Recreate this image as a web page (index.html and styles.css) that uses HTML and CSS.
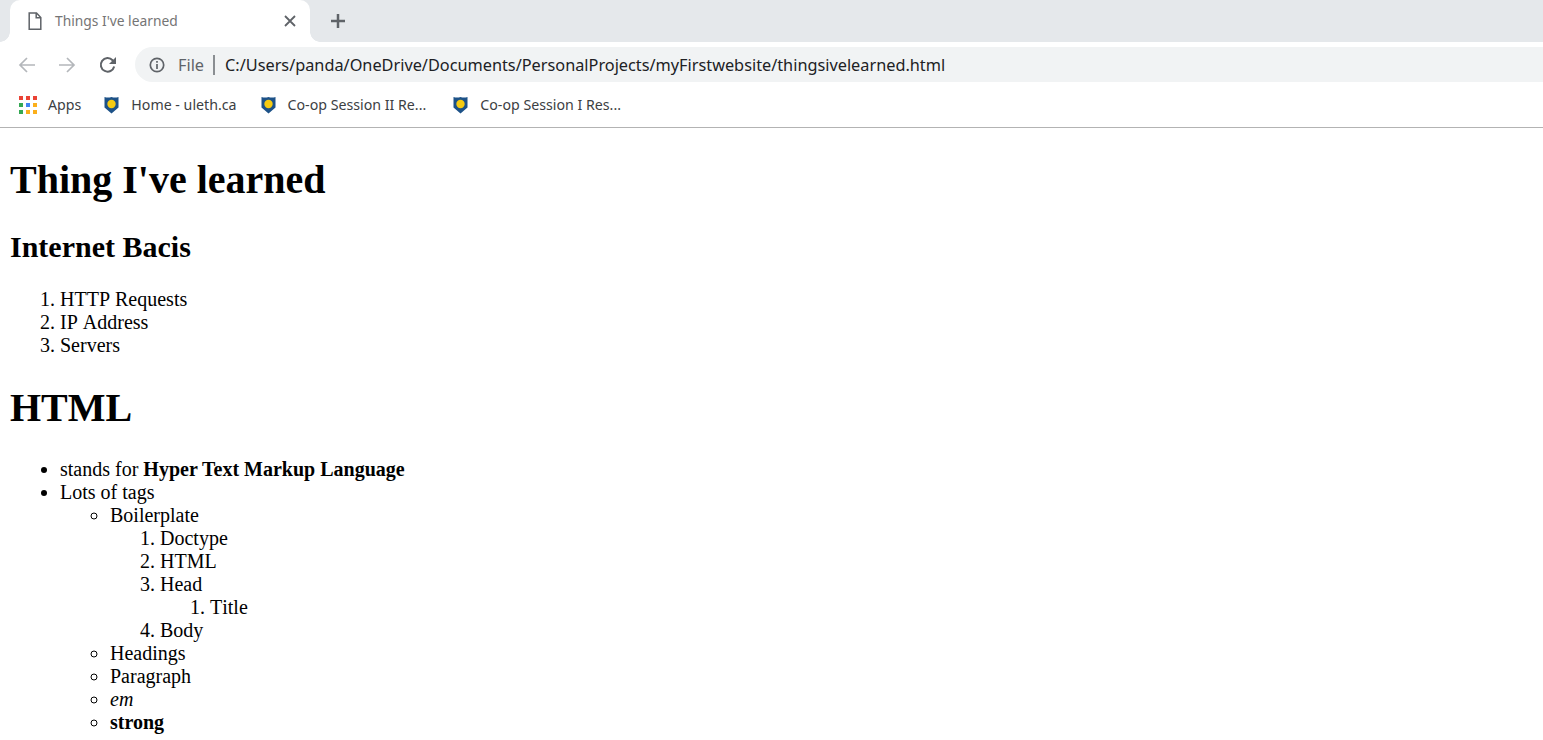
FILE: index.html
```html
<!DOCTYPE html>
<html lang="en">
<head>
<meta charset="utf-8">
<title>Things I've learned</title>
<link rel="stylesheet" href="styles.css">
</head>
<body>
<header class="browser">
  <div class="tabstrip">
    <div class="tab">
      <svg class="tab-icon" width="14" height="18" viewBox="0 0 14 18" fill="none" stroke="#5f6368" stroke-width="1.5"><path d="M1.2 1h7.3l4.3 4.5v11.7H1.2z"/><path d="M8.2 1v4.8h4.6"/></svg>
      <span class="tab-title">Things I've learned</span>
      <svg class="tab-close" width="12" height="12" viewBox="0 0 12 12" stroke="#5f6368" stroke-width="1.8"><path d="M1 1l10 10M11 1L1 11"/></svg>
    </div>
    <svg class="new-tab" width="16" height="16" viewBox="0 0 16 16" stroke="#5f6368" stroke-width="2.5"><path d="M8 1v14M1 8h14"/></svg>
  </div>
  <div class="toolbar">
    <svg class="nav" width="20" height="18" viewBox="0 0 20 18" fill="none" stroke="#b4b7bb" stroke-width="1.7"><path d="M18 9H3M10 2L3 9l7 7"/></svg>
    <svg class="nav" width="20" height="18" viewBox="0 0 20 18" fill="none" stroke="#b4b7bb" stroke-width="1.7"><path d="M2 9h15M10 2l7 7-7 7"/></svg>
    <svg class="nav reload" width="20" height="20" viewBox="0 0 20 20" fill="none"><path d="M16.2 11.5a6.8 6.8 0 1 1-1.6-6.3L16 6.6" stroke="#5f6368" stroke-width="2"/><path d="M18 2v7h-7z" fill="#5f6368"/></svg>
    <div class="omnibox">
      <svg width="16" height="16" viewBox="0 0 16 16" fill="none" stroke="#5f6368" stroke-width="1.7"><circle cx="8" cy="8" r="6.7"/><path d="M8 7v5M8 4v1.8"/></svg>
      <span class="scheme">File</span>
      <span class="sep"></span>
      <span class="url">C:/Users/panda/OneDrive/Documents/PersonalProjects/myFirstwebsite/thingsivelearned.html</span>
    </div>
  </div>
  <nav class="bookmarks">
    <a class="bookmark">
      <span class="apps">
        <i class="r"></i><i class="r"></i><i class="r"></i>
        <i class="g"></i><i class="b"></i><i class="y"></i>
        <i class="g"></i><i class="y"></i><i class="y"></i>
      </span>
      Apps
    </a>
    <a class="bookmark">
      <svg width="15" height="18" viewBox="0 0 15 18"><path d="M0.5 1c2.3.8 4.7.8 7 0 2.3.8 4.7.8 7 0v10.5l-7 6-7-6z" fill="#1d5288"/><circle cx="7.5" cy="8" r="4.2" fill="#f6cb12"/></svg>
      Home - uleth.ca
    </a>
    <a class="bookmark">
      <svg width="15" height="18" viewBox="0 0 15 18"><path d="M0.5 1c2.3.8 4.7.8 7 0 2.3.8 4.7.8 7 0v10.5l-7 6-7-6z" fill="#1d5288"/><circle cx="7.5" cy="8" r="4.2" fill="#f6cb12"/></svg>
      Co-op Session II Re...
    </a>
    <a class="bookmark last">
      <svg width="15" height="18" viewBox="0 0 15 18"><path d="M0.5 1c2.3.8 4.7.8 7 0 2.3.8 4.7.8 7 0v10.5l-7 6-7-6z" fill="#1d5288"/><circle cx="7.5" cy="8" r="4.2" fill="#f6cb12"/></svg>
      Co-op Session I Res...
    </a>
  </nav>
</header>
<main class="page">
  <h1>Thing I've learned</h1>
  <h2>Internet Bacis</h2>
  <ol>
    <li>HTTP Requests</li>
    <li>IP Address</li>
    <li>Servers</li>
  </ol>
  <h1>HTML</h1>
  <ul>
    <li>stands for <strong>Hyper Text Markup Language</strong></li>
    <li>Lots of tags
      <ul>
        <li>Boilerplate
          <ol>
            <li>Doctype</li>
            <li>HTML</li>
            <li>Head
              <ol>
                <li>Title</li>
              </ol>
            </li>
            <li>Body</li>
          </ol>
        </li>
        <li>Headings</li>
        <li>Paragraph</li>
        <li><em>em</em></li>
        <li><strong>strong</strong></li>
      </ul>
    </li>
  </ul>
</main>
</body>
</html>
```
FILE: styles.css
```css
html, body {
  margin: 0;
  padding: 0;
  height: 100%;
  overflow: hidden;
  background: #fff;
}
.browser {
  font-family: "Noto Sans", sans-serif;
  border-bottom: 1px solid #b3b3b3;
}
.tabstrip {
  height: 42px;
  background: #e5e8eb;
  display: flex;
  align-items: center;
  padding-left: 10px;
}
.tab {
  position: relative;
  width: 300px;
  height: 42px;
  box-sizing: border-box;
  background: #fff;
  border-radius: 10px 10px 0 0;
  display: flex;
  align-items: center;
  padding: 0 14px 0 18px;
}
.tab::before, .tab::after {
  content: "";
  position: absolute;
  bottom: 0;
  width: 10px;
  height: 10px;
}
.tab::before {
  left: -10px;
  background: radial-gradient(circle at 0 0, #e5e8eb 9.5px, #fff 10px);
}
.tab::after {
  right: -10px;
  background: radial-gradient(circle at 100% 0, #e5e8eb 9.5px, #fff 10px);
}
.tab-title {
  flex: 1;
  margin: 0 0 2px 13px;
  font-size: 13.8px;
  color: #757575;
}
.new-tab {
  margin-left: 20px;
}
.toolbar {
  height: 43px;
  box-sizing: border-box;
  padding: 2px 0 0 17px;
  display: flex;
  align-items: center;
  gap: 20px;
}
.reload {
  margin-left: 1px;
}
.omnibox {
  flex: 1;
  height: 35px;
  margin-left: -3px;
  background: #f1f3f4;
  border-radius: 18px 0 0 18px;
  display: flex;
  align-items: center;
  padding-left: 14px;
}
.scheme {
  margin-left: 13px;
  font-size: 16.3px;
  color: #5f6368;
}
.sep {
  width: 2px;
  height: 20px;
  margin: 0 10px 0 9px;
  background: #8a8e92;
}
.url {
  font-size: 16.3px;
  color: #202124;
  white-space: nowrap;
}
.bookmarks {
  height: 42px;
  box-sizing: border-box;
  padding: 0 0 3px 19px;
  display: flex;
  align-items: center;
  gap: 24px;
}
.bookmark {
  display: flex;
  align-items: center;
  gap: 12px;
  font-size: 14.2px;
  color: #3c4043;
  white-space: nowrap;
}
.bookmark:first-child {
  margin-right: -1px;
}
.bookmark.last {
  margin-left: 3px;
}
.apps {
  display: grid;
  grid-template-columns: repeat(3, 4px);
  grid-auto-rows: 4px;
  gap: 3px;
  margin-right: -1px;
}
.apps .r { background: #ea4335; }
.apps .g { background: #34a853; }
.apps .b { background: #4285f4; }
.apps .y { background: #fbaf1b; }
.page {
  margin: 0 10px;
  padding-top: 1px;
  font-family: "Liberation Serif", serif;
  font-size: 20px;
  font-kerning: none;
  color: #000;
}
.page strong {
  font-kerning: normal;
}
.page h1 {
  font-size: 40px;
  margin: 26.8px 0;
}
.page h2 {
  font-size: 30px;
  margin: 24.9px 0;
}
.page ol, .page ul {
  margin: 20px 0;
  padding-left: 50px;
}
.page li ol, .page li ul {
  margin: 0;
}
```
